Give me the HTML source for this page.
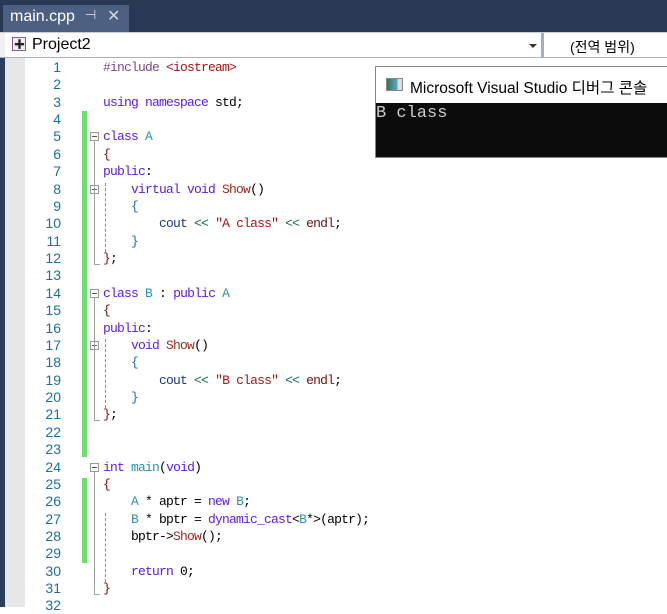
<!DOCTYPE html>
<html><head><meta charset="utf-8"><style>
*{margin:0;padding:0;box-sizing:border-box}
body{width:667px;height:607px;overflow:hidden;background:#fff;position:relative;font-family:"Liberation Sans","Noto Sans CJK KR",sans-serif}
.abs{position:absolute}
.ln{position:absolute;left:20px;width:41px;text-align:right;color:#1d6f9a;font:14px "Liberation Sans",sans-serif;height:17px;line-height:17px}
.cd{position:absolute;left:103px;font:13px "Liberation Mono",monospace;letter-spacing:-0.8px;height:17px;line-height:17px;white-space:pre;color:#000}
.k{color:#5b1de6}.t{color:#2b91af}.s{color:#a31515}.p{color:#7a4a8a}.f{color:#a0281e}.r{color:#6b0f0f}.o{color:#0e6b52}.v{color:#1f377f}.b{color:#1a6fa0}
.fold{position:absolute;left:90px;width:9px;height:9px;border:1px solid #999;background:#fff}
.fold:after{content:"";position:absolute;left:1px;top:3px;width:5px;height:1px;background:#555}
.vl{position:absolute;left:94px;width:1px;background:#a0a0a0}
.hl{position:absolute;left:94px;width:6px;height:1px;background:#a0a0a0}
.dl{position:absolute;width:0;border-left:1px dashed #888}
.g{position:absolute;left:82px;width:5px;background:#6fdc6f}
</style></head><body>
<div class="abs" style="left:0;top:0;width:667px;height:32px;background:#293955"></div>
<div class="abs" style="left:3px;top:5px;width:126px;height:27px;background:#4d6082"></div>
<div class="abs" style="left:10px;top:8px;color:#fff;font-size:16px">main.cpp</div>
<div class="abs" style="left:85px;top:7px;color:#cfd6e4;font-size:13px">⊣</div>
<div class="abs" style="left:107px;top:6px;color:#cfd6e4;font-size:16px">✕</div>
<div class="abs" style="left:0;top:32px;width:667px;height:26px;background:#f0f0f0;border-top:1px solid #c8cdd6;border-bottom:1px solid #a8b0bd"></div>
<div class="abs" style="left:5px;top:33px;width:536px;height:24px;background:#fff"></div>
<div class="abs" style="left:541px;top:33px;width:3px;height:24px;background:#a6aebc"></div>
<div class="abs" style="left:544px;top:33px;width:123px;height:24px;background:#fff"></div>
<div class="abs" style="left:12px;top:37px;width:14px;height:14px;border:1px solid #8a5a9a;background:#eee"></div>
<div class="abs" style="left:14px;top:36px;font-size:11px;color:#222">✚</div>
<div class="abs" style="left:32px;top:36px;font-size:16px;color:#000">Project2</div>
<div class="abs" style="left:529px;top:44px;width:0;height:0;border-left:4px solid transparent;border-right:4px solid transparent;border-top:4px solid #333"></div>
<div class="abs" style="left:570px;top:37px;font-size:14px;color:#000">(전역 범위)</div>
<div class="abs" style="left:0;top:58px;width:5px;height:549px;background:#2c3e5c"></div>
<div class="abs" style="left:5px;top:58px;width:20px;height:549px;background:#e6e7e8"></div>

<div class="g" style="top:111px;height:346px"></div>
<div class="g" style="top:478px;height:85px"></div>

<div id="nums"></div>
<script>
var lines=[
'<span class="p">#include</span> <span class="s">&lt;iostream&gt;</span>','',
'<span class="k">using namespace</span> std;','',
'<span class="k">class</span> <span class="t">A</span>','<span class="r">{</span>','<span class="k">public</span>:',
'    <span class="k">virtual void</span> <span class="f">Show</span>()','    <span class="b">{</span>',
'        <span class="v">cout</span> <span class="o">&lt;&lt;</span> <span class="s">"A class"</span> <span class="o">&lt;&lt;</span> <span class="r">endl</span>;',
'    <span class="b">}</span>','<span class="r">}</span>;','',
'<span class="k">class</span> <span class="t">B</span> : <span class="k">public</span> <span class="t">A</span>','<span class="r">{</span>','<span class="k">public</span>:',
'    <span class="k">void</span> <span class="f">Show</span>()','    <span class="b">{</span>',
'        <span class="v">cout</span> <span class="o">&lt;&lt;</span> <span class="s">"B class"</span> <span class="o">&lt;&lt;</span> <span class="r">endl</span>;',
'    <span class="b">}</span>','<span class="r">}</span>;','','',
'<span class="k">int</span> <span class="t">main</span>(<span class="k">void</span>)','<span class="r">{</span>',
'    <span class="t">A</span> * aptr = <span class="k">new</span> <span class="t">B</span>;',
'    <span class="t">B</span> * bptr = <span class="k">dynamic_cast</span>&lt;<span class="t">B</span>*&gt;(aptr);',
'    bptr-&gt;<span class="f">Show</span>();','',
'    <span class="k">return</span> 0;','<span class="r">}</span>',''];
var h='';
function T(n){return 59+(n-1)*17.37;}
for(var i=0;i<lines.length;i++){var y=T(i+1);
h+='<div class="ln" style="top:'+y+'px">'+(i+1)+'</div><div class="cd" style="top:'+y+'px">'+lines[i]+'</div>';}
[[5,12],[8,11],[14,21],[17,20],[24,31]].forEach(function(b){
var y0=T(b[0])+4;h+='<div class="fold" style="top:'+y0+'px"></div>';});
[[5,12],[14,21],[24,31]].forEach(function(b){
var a=T(b[0])+13,e=T(b[1])+14;h+='<div class="vl" style="top:'+a+'px;height:'+(e-a)+'px"></div><div class="hl" style="top:'+e+'px"></div>';
h+='<div class="dl" style="left:105px;top:'+(T(b[0]+3)+2)+'px;height:'+(T(b[1])-T(b[0]+3))+'px"></div>';});
document.getElementById('nums').innerHTML=h;
</script>

<div class="abs" style="left:375px;top:66px;width:292px;height:92px;border:1px solid #888;border-right:none;background:#0c0c0c"></div>
<div class="abs" style="left:376px;top:67px;width:291px;height:36px;background:#fff"></div>
<div class="abs" style="left:386px;top:78px;width:17px;height:13px;border:1px solid #888;background:linear-gradient(90deg,#2a7a5a,#6aa0c8 70%,#ddd 70%)"></div>
<div class="abs" style="left:410px;top:76px;font-size:15.5px;color:#000;white-space:nowrap">Microsoft Visual Studio 디버그 콘솔</div>
<div class="abs" style="left:376px;top:104px;font:17px 'Liberation Mono',monospace;color:#ccc">B class</div>
</body></html>
